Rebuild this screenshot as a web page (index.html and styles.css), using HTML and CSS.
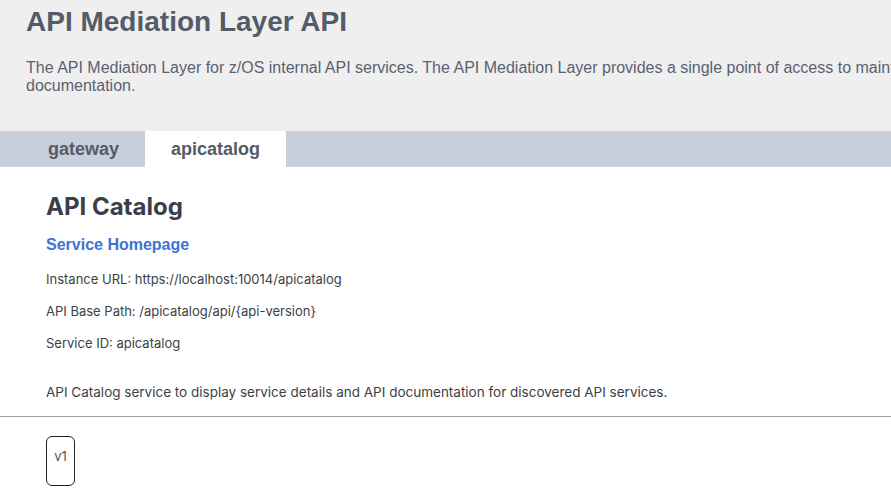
FILE: index.html
```html
<!DOCTYPE html>
<html lang="en">
<head>
<meta charset="utf-8">
<title>API Mediation Layer API</title>
<link rel="stylesheet" href="styles.css">
</head>
<body>
<header class="intro">
  <h1 class="intro-title">API Mediation Layer API</h1>
  <p class="intro-desc">The API Mediation Layer for z/OS internal API services. The API Mediation Layer provides a single point of access to mainframe service REST APIs and offers enterprise cloud-like features such as high-availability, scalability, dynamic API discovery, and<br>documentation.</p>
</header>
<nav class="tabs">
  <div class="tab">gateway</div>
  <div class="tab tab-active">apicatalog</div>
</nav>
<main>
  <section class="service">
    <h2 class="service-title">API Catalog</h2>
    <a class="service-link" href="#">Service Homepage</a>
    <p class="service-info">Instance URL: https://localhost:10014/apicatalog</p>
    <p class="service-info">API Base Path: /apicatalog/api/{api-version}</p>
    <p class="service-info">Service ID: apicatalog</p>
    <p class="service-desc">API Catalog service to display service details and API documentation for discovered API services.</p>
  </section>
  <hr class="divider">
  <div class="versions">
    <div class="version">v1</div>
  </div>
</main>
</body>
</html>
```

FILE: styles.css
```css
html, body {
  margin: 0;
  padding: 0;
  overflow: hidden;
  background: #ffffff;
}

body {
  width: 891px;
  height: 497px;
  font-family: Inter, "Liberation Sans", sans-serif;
}

.intro {
  background: #efefef;
  padding: 6px 26px 36px;
}

.intro-title {
  margin: 0;
  font-family: "Liberation Sans", Arial, sans-serif;
  font-weight: 700;
  font-size: 28px;
  line-height: 32px;
  color: #545b69;
}

.intro-desc {
  margin: 21px 0 0;
  font-family: "Liberation Sans", Arial, sans-serif;
  font-size: 16px;
  line-height: 18px;
  color: #5a6170;
  white-space: nowrap;
}

.tabs {
  display: flex;
  height: 36px;
  padding-left: 22px;
  background: #c8cfdc;
}

.tab {
  padding: 0 26px;
  line-height: 36px;
  font-family: "Liberation Sans", Arial, sans-serif;
  font-weight: 700;
  font-size: 18px;
  color: #565b67;
}

.tab-active {
  background: #ffffff;
}

.service {
  padding: 25px 46px 0;
}

.service-title {
  margin: 0;
  font-family: Inter, sans-serif;
  font-weight: 700;
  font-size: 24px;
  line-height: 29px;
  color: #3a3e48;
}

.service-link {
  display: block;
  margin-top: 15px;
  font-family: "Liberation Sans", Arial, sans-serif;
  font-weight: 700;
  font-size: 16px;
  line-height: 18px;
  color: #3b74d8;
  text-decoration: none;
}

.service-info {
  margin: 16px 0 0;
  font-size: 13px;
  line-height: 16px;
  color: #3d3f45;
}

.service-link + .service-info {
  margin-top: 17px;
}

.service-desc {
  margin: 33px 0 0;
  font-size: 13.5px;
  line-height: 16px;
  color: #3d3f45;
}

.divider {
  margin: 16px 0 0;
  border: 0;
  border-top: 1px solid #a3a3a3;
  height: 0;
}

.versions {
  display: flex;
  padding: 19px 46px 0;
}

.version {
  width: 27px;
  border: 1px solid #222222;
  border-radius: 6px;
  padding-top: 11px;
  box-sizing: content-box;
  height: 37px;
  text-align: center;
  font-size: 13px;
  line-height: 16px;
  color: #555555;
}
```
